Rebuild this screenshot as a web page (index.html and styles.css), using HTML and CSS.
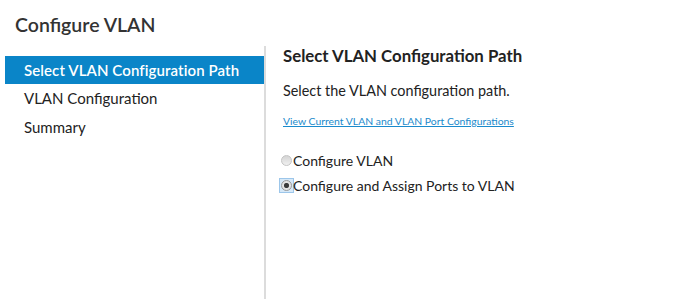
FILE: index.html
```html
<!DOCTYPE html>
<html>
<head>
<meta charset="utf-8">
<link rel="stylesheet" href="styles.css">
</head>
<body>
<h1 class="title">Configure VLAN</h1>
<div class="layout">
  <nav class="sidebar">
    <div class="nav-item active">Select VLAN Configuration Path</div>
    <div class="nav-item">VLAN Configuration</div>
    <div class="nav-item">Summary</div>
  </nav>
  <main class="content">
    <h2 class="heading">Select VLAN Configuration Path</h2>
    <p class="desc">Select the VLAN configuration path.</p>
    <a class="link" href="#">View Current VLAN and VLAN Port Configurations</a>
    <div class="options">
      <label class="option"><span class="radio-wrap"><span class="radio"></span></span>Configure VLAN</label>
      <label class="option"><span class="radio-wrap focus"><span class="radio checked"></span></span>Configure and Assign Ports to VLAN</label>
    </div>
  </main>
</div>
</body>
</html>
```
FILE: styles.css
```css
html, body {
  margin: 0;
  padding: 0;
  background: #fff;
  font-family: Lato, "Liberation Sans", sans-serif;
  color: #222;
  height: 100%;
  overflow: hidden;
}
.title {
  margin: 0;
  padding: 12px 0 0 15px;
  height: 34px;
  font-size: 19.5px;
  font-weight: 600;
  color: #333;
  line-height: 26px;
}
.layout {
  display: flex;
  height: 253px;
}
.sidebar {
  width: 259px;
  margin-left: 5px;
  padding-top: 10px;
  border-right: 2px solid #dcdcdc;
}
.nav-item {
  height: 29px;
  line-height: 28px;
  padding-left: 19px;
  font-size: 15px;
  color: #222;
}
.nav-item.active {
  background: #0a85c8;
  color: #fff;
  font-weight: 600;
  height: 28px;
  letter-spacing: 0.1px;
}
.content {
  padding-left: 17px;
}
.heading {
  margin: 0;
  font-size: 16.8px;
  font-weight: 700;
  line-height: 20px;
  color: #222;
}
.desc {
  margin: 16px 0 0;
  font-size: 14.4px;
  line-height: 18px;
}
.link {
  display: block;
  margin-top: 14px;
  font-size: 10.4px;
  color: #1a8acc;
  line-height: 14px;
}
.options {
  margin-top: 20px;
}
.option {
  display: flex;
  align-items: center;
  height: 25px;
  font-size: 14px;
  margin-left: -4px;
}
.radio-wrap {
  width: 15px;
  height: 15px;
  display: flex;
  align-items: center;
  justify-content: center;
  box-sizing: border-box;
  margin-right: -1px;
}
.radio-wrap.focus {
  background: #d6e8f7;
  border: 1px solid #9cc6ea;
}
.radio {
  width: 11px;
  height: 11px;
  border-radius: 50%;
  border: 1px solid #c4c4c4;
  background: linear-gradient(#d4d4d4, #f0f0f0);
  box-sizing: border-box;
}
.radio.checked {
  border-color: #9a9a9a;
  background: radial-gradient(circle, #3a3a3a 0 2px, #666 2.5px, #e4e4e4 3px);
}
```
